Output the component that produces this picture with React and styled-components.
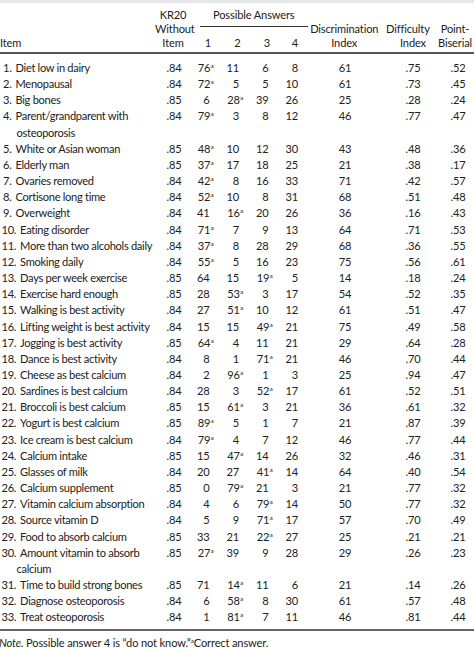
import React from 'react'
import styled, { createGlobalStyle } from 'styled-components'

const Global = createGlobalStyle`
  html, body {
    margin: 0;
    padding: 0;
    background: #fff;
    overflow: hidden;
  }
  body {
    font-family: Lato, "Open Sans", sans-serif;
    color: #222;
    letter-spacing: -0.15px;
  }
`

const COLS = '155px 36px 23px 29.5px 29.5px 29.5px 83.5px 50px 1fr'
const SIZE = '11.1px'

const Page = styled.div`
  width: 474px;
`
const Band = styled.div`
  height: 3px;
  background: #e7e7e7;
`
const Head = styled.div`
  display: grid;
  grid-template-columns: ${COLS};
  grid-template-rows: 14px 14px 14px;
  padding: 5px 0 2px;
  border-bottom: 2px solid #555;
  font-size: ${SIZE};
  line-height: 14px;
`
const HeadCell = styled.div`
  grid-column: ${p => p.$col};
  grid-row: ${p => p.$row};
  text-align: ${p => p.$align || 'center'};
  padding: ${p => p.$pad || '0'};
  white-space: nowrap;
`
const Rule = styled.div`
  grid-column: 3 / 7;
  grid-row: 2;
  align-self: start;
  margin: 4px -5px 0 9px;
  border-bottom: 1px solid #333;
`
const Body = styled.div`
  padding: 6px 0 4px;
  border-bottom: 2px solid #666;
`
const Row = styled.div`
  display: grid;
  grid-template-columns: ${COLS};
  font-size: ${SIZE};
  line-height: 16.15px;
  align-items: start;
`
const ItemCell = styled.div`
  padding-left: 1.5px;
  min-width: 0;
  letter-spacing: -0.3px;
`
const FirstLine = styled.div`
  display: flex;
  gap: 4px;
  white-space: nowrap;
`
const Num = styled.span`
  flex-shrink: 0;
  min-width: 10px;
  text-align: right;
`
const ContLine = styled.div`
  padding-left: 15px;
`
const Cell = styled.div`
  text-align: ${p => p.$align || 'center'};
  padding: ${p => p.$pad || '0'};
  white-space: nowrap;
`
const Sup = styled.sup`
  font-size: 6.5px;
  line-height: 0;
  vertical-align: 4px;
  margin-right: ${p => (p.$hang ? '-4px' : '0')};
`
const Note = styled.div`
  margin: 5px 0 0 -1px;
  font-size: ${SIZE};
  line-height: 14px;
  white-space: nowrap;
`

const rows = [
  ['1', ['Diet low in dairy'], '.84', ['76a', '11', '6', '8'], '61', '.75', '.52'],
  ['2', ['Menopausal'], '.84', ['72a', '5', '5', '10'], '61', '.73', '.45'],
  ['3', ['Big bones'], '.85', ['6', '28a', '39', '26'], '25', '.28', '.24'],
  ['4', ['Parent/grandparent with', 'osteoporosis'], '.84', ['79a', '3', '8', '12'], '46', '.77', '.47'],
  ['5', ['White or Asian woman'], '.85', ['48a', '10', '12', '30'], '43', '.48', '.36'],
  ['6', ['Elderly man'], '.85', ['37a', '17', '18', '25'], '21', '.38', '.17'],
  ['7', ['Ovaries removed'], '.84', ['42a', '8', '16', '33'], '71', '.42', '.57'],
  ['8', ['Cortisone long time'], '.84', ['52a', '10', '8', '31'], '68', '.51', '.48'],
  ['9', ['Overweight'], '.84', ['41', '16a', '20', '26'], '36', '.16', '.43'],
  ['10', ['Eating disorder'], '.84', ['71a', '7', '9', '13'], '64', '.71', '.53'],
  ['11', ['More than two alcohols daily'], '.84', ['37a', '8', '28', '29'], '68', '.36', '.55'],
  ['12', ['Smoking daily'], '.84', ['55a', '5', '16', '23'], '75', '.56', '.61'],
  ['13', ['Days per week exercise'], '.85', ['64', '15', '19a', '5'], '14', '.18', '.24'],
  ['14', ['Exercise hard enough'], '.85', ['28', '53a', '3', '17'], '54', '.52', '.35'],
  ['15', ['Walking is best activity'], '.84', ['27', '51a', '10', '12'], '61', '.51', '.47'],
  ['16', ['Lifting weight is best activity'], '.84', ['15', '15', '49a', '21'], '75', '.49', '.58'],
  ['17', ['Jogging is best activity'], '.85', ['64a', '4', '11', '21'], '29', '.64', '.28'],
  ['18', ['Dance is best activity'], '.84', ['8', '1', '71a', '21'], '46', '.70', '.44'],
  ['19', ['Cheese as best calcium'], '.84', ['2', '96a', '1', '3'], '25', '.94', '.47'],
  ['20', ['Sardines is best calcium'], '.84', ['28', '3', '52a', '17'], '61', '.52', '.51'],
  ['21', ['Broccoli is best calcium'], '.85', ['15', '61a', '3', '21'], '36', '.61', '.32'],
  ['22', ['Yogurt is best calcium'], '.85', ['89a', '5', '1', '7'], '21', '.87', '.39'],
  ['23', ['Ice cream is best calcium'], '.84', ['79a', '4', '7', '12'], '46', '.77', '.44'],
  ['24', ['Calcium intake'], '.85', ['15', '47a', '14', '26'], '32', '.46', '.31'],
  ['25', ['Glasses of milk'], '.84', ['20', '27', '41a', '14'], '64', '.40', '.54'],
  ['26', ['Calcium supplement'], '.85', ['0', '79a', '21', '3'], '21', '.77', '.32'],
  ['27', ['Vitamin calcium absorption'], '.84', ['4', '6', '79a', '14'], '50', '.77', '.32'],
  ['28', ['Source vitamin D'], '.84', ['5', '9', '71a', '17'], '57', '.70', '.49'],
  ['29', ['Food to absorb calcium'], '.85', ['33', '21', '22a', '27'], '25', '.21', '.21'],
  ['30', ['Amount vitamin to absorb', 'calcium'], '.85', ['27a', '39', '9', '28'], '29', '.26', '.23'],
  ['31', ['Time to build strong bones'], '.85', ['71', '14a', '11', '6'], '21', '.14', '.26'],
  ['32', ['Diagnose osteoporosis'], '.84', ['6', '58a', '8', '30'], '61', '.57', '.48'],
  ['33', ['Treat osteoporosis'], '.84', ['1', '81a', '7', '11'], '46', '.81', '.44'],
]

const Answer = ({ v }) => {
  const correct = v.endsWith('a')
  return (
    <Cell $align="right" $pad="0 4.5px 0 0">
      {correct ? v.slice(0, -1) : v}
      {correct ? <Sup $hang>a</Sup> : ''}
    </Cell>
  )
}

const App = () => (
  <Page>
    <Global />
    <Band />
    <Head>
      <HeadCell $col="1" $row="3" $align="left">Item</HeadCell>
      <HeadCell $col="2" $row="1">KR20</HeadCell>
      <HeadCell $col="2" $row="2">Without</HeadCell>
      <HeadCell $col="2" $row="3">Item</HeadCell>
      <HeadCell $col="3 / 7" $row="1" $pad="0 0 0 14px">Possible Answers</HeadCell>
      <Rule />
      {['1', '2', '3', '4'].map((n, i) => (
        <HeadCell key={n} $col={String(3 + i)} $row="3" $align="right" $pad={i === 3 ? '0 4.5px 0 0' : '0 3px 0 0'}>{n}</HeadCell>
      ))}
      <HeadCell $col="7" $row="2">Discrimination</HeadCell>
      <HeadCell $col="7" $row="3">Index</HeadCell>
      <HeadCell $col="8" $row="2" $pad="0 10px 0 0">Difficulty</HeadCell>
      <HeadCell $col="8" $row="3" $pad="0 0 0 4px">Index</HeadCell>
      <HeadCell $col="9" $row="2">Point-</HeadCell>
      <HeadCell $col="9" $row="3">Biserial</HeadCell>
    </Head>
    <Body>
      {rows.map(([n, lines, kr, ans, di, diff, pb]) => (
        <Row key={n}>
          <ItemCell>
            <FirstLine>
              <Num>{n}.</Num>
              <span>{lines[0]}</span>
            </FirstLine>
            {lines[1] ? <ContLine>{lines[1]}</ContLine> : ''}
          </ItemCell>
          <Cell $pad="0 0 0 2px">{kr}</Cell>
          {ans.map((v, i) => <Answer key={i} v={v} />)}
          <Cell $pad="0 0 0 1.5px">{di}</Cell>
          <Cell $pad="0 0 0 4px">{diff}</Cell>
          <Cell $pad="0 0 0 6px">{pb}</Cell>
        </Row>
      ))}
    </Body>
    <Note>
      <i>Note.</i> Possible answer 4 is “do not know.”<Sup>a</Sup>Correct answer.
    </Note>
  </Page>
)

export default App
